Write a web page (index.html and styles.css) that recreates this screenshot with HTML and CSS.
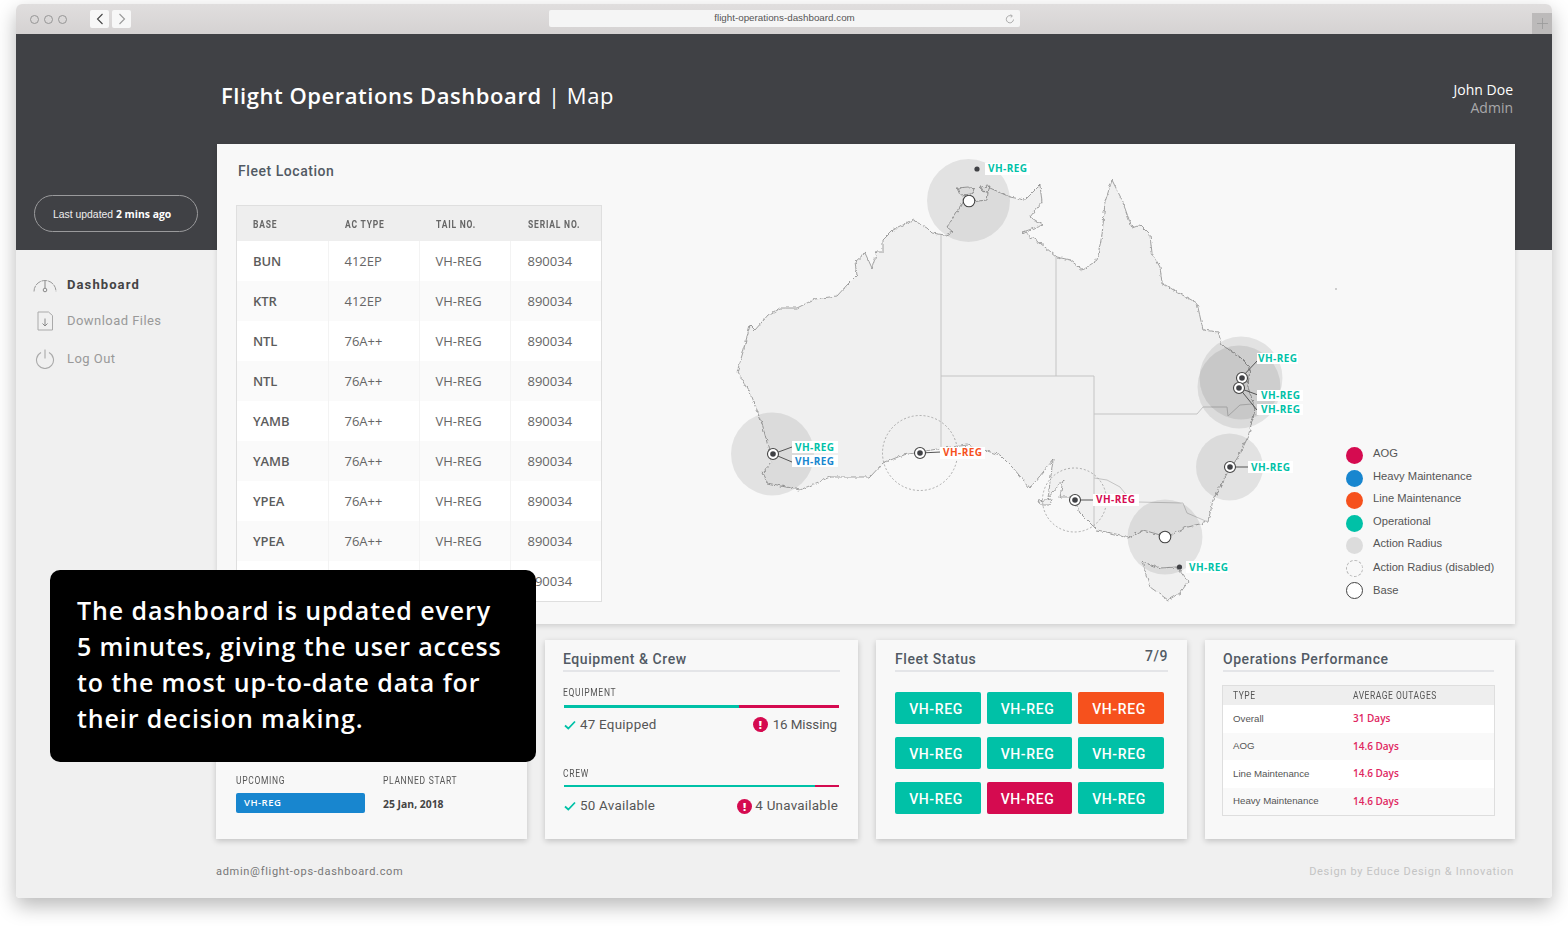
FILE: index.html
```html
<!DOCTYPE html>
<html lang="en">
<head>
<meta charset="utf-8">
<title>Flight Operations Dashboard</title>
<link rel="stylesheet" href="styles.css">
</head>
<body>
<div class="window">
  <div class="titlebar">
    <div class="lights"><i></i><i></i><i></i></div>
    <div class="navbtns">
      <span class="navbtn"><svg width="8" height="12" viewBox="0 0 8 12"><path d="M6.5 1 1.5 6l5 5" fill="none" stroke="#444" stroke-width="1.1"/></svg></span>
      <span class="navbtn"><svg width="8" height="12" viewBox="0 0 8 12"><path d="M1.5 1l5 5-5 5" fill="none" stroke="#999" stroke-width="1.1"/></svg></span>
    </div>
    <div class="address">flight-operations-dashboard.com
      <svg class="reload" width="10" height="10" viewBox="0 0 10 10"><path d="M8.5 5.5A3.6 3.6 0 1 1 6.5 2" fill="none" stroke="#999" stroke-width=".8"/><path d="M5.6.6 7.4 2 5.8 3.4" fill="none" stroke="#999" stroke-width=".8"/></svg>
    </div>
    <div class="plus"><svg width="11" height="11" viewBox="0 0 11 11"><path d="M5.5 0v11M0 5.5h11" stroke="#999" stroke-width=".8"/></svg></div>
  </div>

  <div class="app">
    <aside class="sidebar">
      <div class="updated">Last updated <b>2 mins ago</b></div>
      <nav class="nav">
        <a class="nav-item nav-active">
          <svg class="nav-icon" width="24" height="18" viewBox="0 0 24 18"><path d="M1 15.5a11 11 0 0 1 22 0" fill="none" stroke="#999" stroke-width="1" stroke-dasharray="6 .8"/><path d="M12 5v7" stroke="#888"/><circle cx="12" cy="14" r="1.8" fill="none" stroke="#888"/></svg>
          Dashboard
        </a>
        <a class="nav-item">
          <svg class="nav-icon" width="24" height="20" viewBox="0 0 24 20"><path d="M5 1h10.500L19.500 4.500V19H5z" fill="none" stroke="#aaa"/><path d="M12 7.500v7M9.500 12.500l2.500 2.500 2.500-2.500" fill="none" stroke="#888"/></svg>
          Download Files
        </a>
        <a class="nav-item">
          <svg class="nav-icon" width="24" height="20" viewBox="0 0 24 20"><path d="M8 3.500a8.500 8.500 0 1 0 8 0" fill="none" stroke="#aaa" stroke-width="1.100"/><path d="M12 .5v9" stroke="#aaa" stroke-width="1.100"/></svg>
          Log Out
        </a>
      </nav>
    </aside>

    <main class="main">
      <header class="head">
        <h1 class="title"><b>Flight Operations Dashboard</b> | Map</h1>
        <div class="user"><div class="user-name">John Doe</div><div class="user-role">Admin</div></div>
      </header>

      <section class="fleet">
        <svg class="map" width="1298" height="480" viewBox="217 144 1298 480">
          <defs>
            <filter id="rough" x="-5%" y="-5%" width="110%" height="110%">
              <feTurbulence type="fractalNoise" baseFrequency="0.24" numOctaves="2" seed="4"/>
              <feDisplacementMap in="SourceGraphic" scale="4" xChannelSelector="R" yChannelSelector="G"/>
            </filter>
          </defs>
          <g class="land" filter="url(#rough)">
            <path d="M742 380 737 372 743 352 750 325 755 330 768 315 780 308 797 308 815 299 837 296 847 285 857 275 855 262 865 253 872 268 877 252 883 252 883 240 893 230 913 220 927 228 932 233 945 235 953 232 947 227 957 212 963 203 987 200 988 193 980 190 990 188 1010 197 1025 200 1040 185 1042 202 1030 217 1043 225 1023 232 1040 243 1057 257 1070 260 1083 270 1097 260 1102 235 1105 202 1112 180 1122 200 1132 228 1140 225 1150 235 1152 253 1160 267 1162 283 1177 292 1197 303 1203 330 1218 332 1222 345 1240 357 1250 367 1248 387 1255 410 1248 437 1238 457 1225 477 1213 500 1208 522 1187 527 1167 537 1143 530 1128 538 1120 535 1097 530 1080 513 1073 497 1060 497 1063 480 1048 498 1053 460 1030 488 1013 468 1000 455 968 445 943 448 903 455 883 463 870 477 830 477 800 490 767 483 762 473 772 462 762 423 752 397z"/>
            <path d="M1142 562 1160 568 1177 567 1188 582 1180 593 1168 600 1150 587z"/>
            <path d="M1038 501 1052 499 1050 505 1040 505z"/>
            <path d="M957 188 968 187 974 189 972 194 960 195z"/>
            <path d="M980 187 990 186 988 192 982 191z"/>
          </g>
          <g class="borders">
            <path d="M941 235V447"/>
            <path d="M1056 257V376"/>
            <path d="M941 376H1094V527"/>
            <path d="M1094 414H1197L1203 407 1227 407 1228 416 1240 405 1252 404"/>
            <path d="M1094 478 1107 480 1120 487 1128 497 1138 502 1183 503 1187 513 1208 522"/>
          </g>
          <circle class="speck" cx="1336" cy="289" r=".8"/>

          <circle class="radius" cx="968.500" cy="200.500" r="41.500"/>
          <circle class="radius" cx="1241" cy="378" r="41.500"/>
          <circle class="radius" cx="1239" cy="387" r="41.500"/>
          <circle class="radius" cx="1229.500" cy="467" r="33.500"/>
          <circle class="radius" cx="1165" cy="537" r="37.500"/>
          <circle class="radius" cx="772.500" cy="454" r="41.500"/>
          <circle class="radius-off" cx="920" cy="453" r="37.500"/>
          <circle class="radius-off" cx="1074.500" cy="500" r="32"/>

          <g class="leads">
            <path d="M1241 378 1258 360M1239 388 1258 395M1239 388 1257 410M1230 467H1248M773 454 792 447M773 454 792 462M920 453 941 452M1075 500H1094"/>
          </g>

          <circle class="base" cx="969" cy="201" r="5.800"/>
          <circle class="base" cx="1165" cy="537" r="5.800"/>
          <circle class="pin-dot" cx="977" cy="169" r="2.600"/>
          <circle class="pin-dot" cx="1179.500" cy="567" r="2.600"/>

          <g>
            <circle class="pin" cx="1242" cy="378" r="5.500"/><circle class="pin-dot" cx="1242" cy="378" r="2.800"/>
            <circle class="pin" cx="1239" cy="388" r="5.500"/><circle class="pin-dot" cx="1239" cy="388" r="2.800"/>
            <circle class="pin" cx="1230" cy="467" r="5.500"/><circle class="pin-dot" cx="1230" cy="467" r="2.800"/>
            <circle class="pin" cx="773" cy="454" r="5.500"/><circle class="pin-dot" cx="773" cy="454" r="2.800"/>
            <circle class="pin" cx="920" cy="453" r="5.500"/><circle class="pin-dot" cx="920" cy="453" r="2.800"/>
            <circle class="pin" cx="1075" cy="500" r="5.500"/><circle class="pin-dot" cx="1075" cy="500" r="2.800"/>
          </g>

          <rect class="tag" x="985" y="163" width="45" height="12"/><text class="tag-text teal" x="988" y="172">VH-REG</text>
          <rect class="tag" x="1257" y="353" width="41" height="11"/><text class="tag-text teal" x="1258" y="362">VH-REG</text>
          <rect class="tag" x="1257" y="390" width="46" height="11"/><text class="tag-text teal" x="1261" y="399">VH-REG</text>
          <rect class="tag" x="1257" y="404" width="46" height="11"/><text class="tag-text teal" x="1261" y="413">VH-REG</text>
          <rect class="tag" x="1248" y="461" width="45" height="12"/><text class="tag-text teal" x="1251" y="471">VH-REG</text>
          <rect class="tag" x="1186" y="561" width="42" height="12"/><text class="tag-text teal" x="1189" y="571">VH-REG</text>
          <rect class="tag" x="792" y="441" width="46" height="12"/><text class="tag-text teal" x="795" y="451">VH-REG</text>
          <rect class="tag" x="792" y="455" width="46" height="12"/><text class="tag-text blue" x="795" y="465">VH-REG</text>
          <rect class="tag" x="940" y="447" width="45" height="12"/><text class="tag-text orange" x="943" y="456">VH-REG</text>
          <rect class="tag" x="1093" y="494" width="46" height="12"/><text class="tag-text crimson" x="1096" y="503">VH-REG</text>
        </svg>

        <h2 class="card-title fleet-title">Fleet Location</h2>

        <table class="fleet-table">
          <thead>
            <tr><th><span>BASE</span></th><th><span>AC TYPE</span></th><th><span>TAIL NO.</span></th><th><span>SERIAL NO.</span></th></tr>
          </thead>
          <tbody>
            <tr><td>BUN</td><td>412EP</td><td>VH-REG</td><td>890034</td></tr>
            <tr><td>KTR</td><td>412EP</td><td>VH-REG</td><td>890034</td></tr>
            <tr><td>NTL</td><td>76A++</td><td>VH-REG</td><td>890034</td></tr>
            <tr><td>NTL</td><td>76A++</td><td>VH-REG</td><td>890034</td></tr>
            <tr><td>YAMB</td><td>76A++</td><td>VH-REG</td><td>890034</td></tr>
            <tr><td>YAMB</td><td>76A++</td><td>VH-REG</td><td>890034</td></tr>
            <tr><td>YPEA</td><td>76A++</td><td>VH-REG</td><td>890034</td></tr>
            <tr><td>YPEA</td><td>76A++</td><td>VH-REG</td><td>890034</td></tr>
            <tr><td>YPEA</td><td>76A++</td><td>VH-REG</td><td>890034</td></tr>
          </tbody>
        </table>

        <ul class="legend">
          <li><i class="swatch s-aog"></i>AOG</li>
          <li><i class="swatch s-heavy"></i>Heavy Maintenance</li>
          <li><i class="swatch s-line"></i>Line Maintenance</li>
          <li><i class="swatch s-op"></i>Operational</li>
          <li><i class="swatch s-radius"></i>Action Radius</li>
          <li><i class="swatch s-off"></i>Action Radius (disabled)</li>
          <li><i class="swatch s-base"></i>Base</li>
        </ul>
      </section>

      <section class="cards">
        <article class="card card-upcoming">
          <div class="upcoming">
            <div class="micro">UPCOMING</div>
            <div class="micro">PLANNED START</div>
            <div class="upcoming-bar">VH-REG</div>
            <div class="upcoming-date">25 Jan, 2018</div>
          </div>
        </article>

        <article class="card">
          <h2 class="card-title card-head">Equipment &amp; Crew</h2>
          <div class="micro micro-first">EQUIPMENT</div>
          <div class="bar"><span class="bar-ok bar-ok-eq"></span><span class="bar-bad"></span></div>
          <div class="stat">
            <span class="stat-item"><svg class="check" width="12" height="10" viewBox="0 0 12 10"><path d="M1 5.500 4.300 8.500 11 1.500" fill="none" stroke="#00c1a7" stroke-width="1.800"/></svg>47 Equipped</span>
            <span class="stat-item stat-miss"><span class="alert">!</span>16 Missing</span>
          </div>
          <div class="micro micro-second">CREW</div>
          <div class="bar bar-crew"><span class="bar-ok bar-ok-crew"></span><span class="bar-bad"></span></div>
          <div class="stat stat-last">
            <span class="stat-item"><svg class="check" width="12" height="10" viewBox="0 0 12 10"><path d="M1 5.500 4.300 8.500 11 1.500" fill="none" stroke="#00c1a7" stroke-width="1.800"/></svg>50 Available</span>
            <span class="stat-item"><span class="alert alert-tight">!</span>4 Unavailable</span>
          </div>
        </article>

        <article class="card card-status">
          <h2 class="card-title card-head status-head"><span>Fleet Status</span><span class="count">7/9</span></h2>
          <div class="tails">
            <div class="tail t-op">VH-REG</div><div class="tail t-op">VH-REG</div><div class="tail t-line">VH-REG</div>
            <div class="tail t-op">VH-REG</div><div class="tail t-op">VH-REG</div><div class="tail t-op">VH-REG</div>
            <div class="tail t-op">VH-REG</div><div class="tail t-aog">VH-REG</div><div class="tail t-op">VH-REG</div>
          </div>
        </article>

        <article class="card card-perf">
          <h2 class="card-title card-head">Operations Performance</h2>
          <table class="perf">
            <thead><tr><th><span>TYPE</span></th><th><span>AVERAGE OUTAGES</span></th></tr></thead>
            <tbody>
              <tr><td>Overall</td><td>31 Days</td></tr>
              <tr><td>AOG</td><td>14.6 Days</td></tr>
              <tr><td>Line Maintenance</td><td>14.6 Days</td></tr>
              <tr><td>Heavy Maintenance</td><td>14.6 Days</td></tr>
            </tbody>
          </table>
        </article>
      </section>

      <footer class="foot">
        <span>admin@flight-ops-dashboard.com</span>
        <span class="credit">Design by Educe Design &amp; Innovation</span>
      </footer>
    </main>

    <div class="callout">The dashboard is updated every<br>5 minutes, giving the user access<br>to the most up-to-date data for<br>their decision making.</div>
  </div>
</div>
</body>
</html>
```

FILE: styles.css
```css
* { box-sizing: border-box; }
html, body { margin: 0; padding: 0; background: #fff; overflow: hidden; }
body { height: 926px; padding: 4px 16px 0; font-family: Roboto, "Liberation Sans", sans-serif; }

.window { width: 1536px; height: 894px; border-radius: 6px 6px 4px 4px; box-shadow: 0 8px 20px rgba(0,0,0,.28); display: flex; flex-direction: column; }

/* browser chrome */
.titlebar { height: 30px; flex: none; background: linear-gradient(#e0dede, #d5d2d2); border-radius: 6px 6px 0 0; display: flex; align-items: flex-start; position: relative; }
.lights { display: flex; gap: 5px; margin: 11px 0 0 14px; }
.lights i { width: 9px; height: 9px; border-radius: 50%; border: 1px solid #969696; }
.navbtns { display: flex; gap: 3px; margin: 6px 0 0 23px; }
.navbtn { width: 19px; height: 18px; background: #f7f7f7; border-radius: 2px; display: flex; align-items: center; justify-content: center; }
.address { position: absolute; left: 533px; top: 6px; width: 471px; height: 17px; background: #f5f5f5; border-radius: 2px; font: 9.800px/16px "Liberation Sans", sans-serif; color: #555; text-align: center; }
.reload { position: absolute; right: 5px; top: 4px; }
.plus { position: absolute; right: 0; top: 9px; width: 20px; height: 21px; background: #bcbaba; display: flex; align-items: center; justify-content: center; }

/* app shell */
.app { flex: 1; position: relative; display: flex; background: linear-gradient(#404145 216px, #f0f0f0 216px); border-radius: 0 0 4px 4px; }
.sidebar { width: 201px; flex: none; padding: 161px 0 0 18px; }
.updated { width: 164px; height: 37px; border: 1px solid #9a9a9c; border-radius: 19px; padding-left: 18px; font: 10.400px/36px "Liberation Sans", sans-serif; color: #eee; }
.updated b { font-family: "Open Sans", sans-serif; font-weight: 700; color: #fff; font-size: 10.400px; }
.nav { margin-top: 35px; display: flex; flex-direction: column; }
.nav-item { display: flex; align-items: center; height: 36px; gap: 10px; font-size: 13px; letter-spacing: .45px; color: #999; margin-left: -1px; padding-bottom: 1px; }
.nav-item:nth-child(3) { margin-top: 2px; }
.nav-active { color: #444; font-weight: 700; letter-spacing: 1.100px; }
.nav-icon { flex: none; }

.main { width: 1298px; flex: none; }
.head { height: 110px; display: flex; justify-content: space-between; align-items: flex-start; padding: 44px 2px 0 4px; }
.title { margin: 0; font: 400 22px/34px "Open Sans", sans-serif; letter-spacing: .55px; color: #fff; }
.title b { font-weight: 600; }
.user { font: 400 14px/18px "Open Sans", sans-serif; text-align: right; margin-top: 3px; }
.user-name { color: #fff; }
.user-role { color: #a8a8aa; }

/* fleet panel */
.fleet { position: relative; height: 480px; background: #f8f8f8; box-shadow: 0 2px 5px rgba(0,0,0,.14); padding: 18px 0 0 21px; }
.map { position: absolute; left: 0; top: 0; }
.land path { fill: #f0f0f0; stroke: #7c7c7c; stroke-width: .7; stroke-linejoin: round; }
.borders path { fill: none; stroke: #c4c4c4; stroke-width: 1; }
.speck { fill: #999; }
.radius { fill: rgba(0,0,0,.085); }
.radius-off { fill: none; stroke: #999; stroke-width: .8; stroke-dasharray: 2 2; }
.leads path { fill: none; stroke: #555; stroke-width: 1; }
.base { fill: #fff; stroke: #444; stroke-width: 1.100; }
.pin { fill: #fff; stroke: #444; stroke-width: 1.100; }
.pin-dot { fill: #404145; }
.tag { fill: #fff; }
.tag-text { font: 700 10px "Open Sans", sans-serif; letter-spacing: .45px; }
.teal { fill: #00c1a7; }
.blue { fill: #1886cf; }
.orange { fill: #f6511d; }
.crimson { fill: #d50b50; }

.card-title { margin: 0; font: 500 14px/18px Roboto, sans-serif; letter-spacing: .55px; color: #525a64; }
.fleet-title { position: relative; }
.fleet-table { position: absolute; left: 20px; top: 62px; width: 364px; border-collapse: collapse; table-layout: fixed; background: #fff; box-shadow: 0 0 0 1px #dfdfdf; }
.fleet-table th { height: 35px; background: #eeeeee; text-align: left; padding: 0 0 2px 17px; }
.fleet-table th span { display: inline-block; font: 700 10px Roboto, sans-serif; letter-spacing: .95px; color: #666; transform: scaleX(.85); transform-origin: left; white-space: nowrap; }
.fleet-table td { height: 40px; padding: 0 0 0 16px; font: 400 13px "Open Sans", sans-serif; color: #666; border-right: 1px solid #f3f3f3; }
.fleet-table td:last-child { border-right: 0; padding-left: 17px; }
.fleet-table th:last-child { padding-left: 18px; }
.fleet-table td:first-child, .fleet-table th:first-child { padding-left: 16px; }
.fleet-table td:first-child { font-weight: 600; color: #5c5c5c; letter-spacing: -.1px; }
.fleet-table tbody tr:nth-child(even) td { background: #fafafa; }
.fleet-table th:nth-child(-n+3) { width: 91px; }

.legend { position: absolute; left: 1129px; top: 298px; margin: 0; padding: 0; list-style: none; font: 11.200px "Liberation Sans", sans-serif; color: #555; }
.legend li { display: flex; align-items: center; height: 22.500px; gap: 10px; }
.legend li:nth-child(n+6) { margin-top: 1px; }
.swatch { width: 17px; height: 17px; border-radius: 50%; flex: none; margin-top: 5px; }
.s-aog { background: #d50b50; }
.s-heavy { background: #1886cf; }
.s-line { background: #f6511d; }
.s-op { background: #00c1a7; }
.s-radius { background: #dcdcdc; }
.s-off { border: 1px dashed #b5b5b5; margin-top: 3px; }
.s-base { background: #fff; border: 1px solid #444; margin-top: 1px; }

/* cards */
.cards { display: flex; gap: 18px; margin: 16px 0 0 -1px; height: 199px; }
.card { width: 312px; height: 199px; background: #f8f8f8; box-shadow: 0 2px 6px rgba(0,0,0,.2); padding: 10px 18px 0; }
.card:nth-child(1) { width: 311px; }
.card:nth-child(2) { width: 313px; }
.card:nth-child(3) { width: 311px; padding-left: 19px; padding-right: 19px; }
.card:nth-child(4) { width: 310px; padding-right: 21px; }
.card-head { height: 22px; border-bottom: 2px solid #e4e5e8; }
.card-upcoming { display: flex; flex-direction: column; justify-content: flex-end; padding: 0 20px 26px 20px; }
.upcoming { display: grid; grid-template-columns: 147px 1fr; row-gap: 7px; align-items: center; }
.micro { font: 400 10px/11px Roboto, sans-serif; letter-spacing: .8px; color: #555; transform: scaleX(.85); transform-origin: left; white-space: nowrap; }
.upcoming-bar { width: 129px; height: 20px; background: #1886cf; border-radius: 2px; color: #fff; font: 600 9.500px/20px "Open Sans", sans-serif; letter-spacing: .5px; padding-left: 8px; }
.upcoming-date { font: 700 10.400px "Open Sans", sans-serif; color: #444; padding-top: 2px; }
.micro-first { margin-top: 15px; }
.micro-second { margin-top: 33px; }
.bar { display: flex; height: 2.500px; margin: 7px 1px 0; }
.bar-crew { margin-top: 6px; }
.bar-ok { background: #00c1a7; }
.bar-bad { flex: 1; background: #d50b50; }
.bar-ok-eq { width: 175px; }
.bar-ok-crew { width: 251px; }
.stat { display: flex; justify-content: space-between; align-items: center; height: 20px; margin-top: 7px; padding: 0 3px 0 1px; font: 400 13.400px/20px Roboto, sans-serif; letter-spacing: .25px; color: #555; }
.stat-last { margin-top: 9px; padding-right: 2px; }
.stat-item { display: flex; align-items: center; }
.stat-miss { letter-spacing: -.1px; }
.check { margin-right: 4px; }
.alert { width: 15px; height: 15px; border-radius: 50%; background: #d50b50; color: #fff; font: 800 11px/15px "Open Sans", sans-serif; text-align: center; margin-right: 5px; }
.alert-tight { margin-right: 3px; }
.status-head { display: flex; justify-content: space-between; }
.count { margin-top: -3px; }
.tails { display: grid; grid-template-columns: 86px 85px 86px; gap: 13px 6px; margin-top: 20px; }
.tail { height: 32px; border-radius: 2px; color: #fff; font: 500 14px/34px Roboto, sans-serif; letter-spacing: .6px; text-align: center; padding-right: 4px; }
.t-op { background: #00c1a7; }
.t-line { background: #f6511d; }
.t-aog { background: #d50b50; }
.perf { width: 271px; margin-top: 14px; border-collapse: collapse; table-layout: fixed; background: #fff; box-shadow: 0 0 0 1px #dedede; }
.perf th { height: 19px; background: #eeeeee; padding: 0 0 0 10px; text-align: left; font-size: 10px; line-height: 12px; }
.perf th span { display: inline-block; font: 400 10px/12px Roboto, sans-serif; letter-spacing: .6px; color: #555; transform: scaleX(.85); transform-origin: left; white-space: nowrap; }
.perf th:first-child { width: 120px; }
.perf td { height: 27.500px; padding: 0 0 1px 10px; font: 9.700px "Liberation Sans", sans-serif; color: #555; }
.perf td:last-child { font: 600 10px "Open Sans", sans-serif; color: #e0265f; }
.perf tbody tr:nth-child(even) td { background: #f9f9f9; }

.foot { display: flex; justify-content: space-between; margin: 26px 1px 0 -1px; font: 400 11px/14px Roboto, sans-serif; letter-spacing: .7px; color: #777; }
.credit { color: #c4c4c4; }

.callout { position: absolute; left: 34px; top: 536px; width: 486px; height: 192px; background: #000; border-radius: 10px; padding: 22px 0 0 27px; color: #fff; font: 600 25px/36px "Open Sans", sans-serif; letter-spacing: .9px; white-space: nowrap; }
```
